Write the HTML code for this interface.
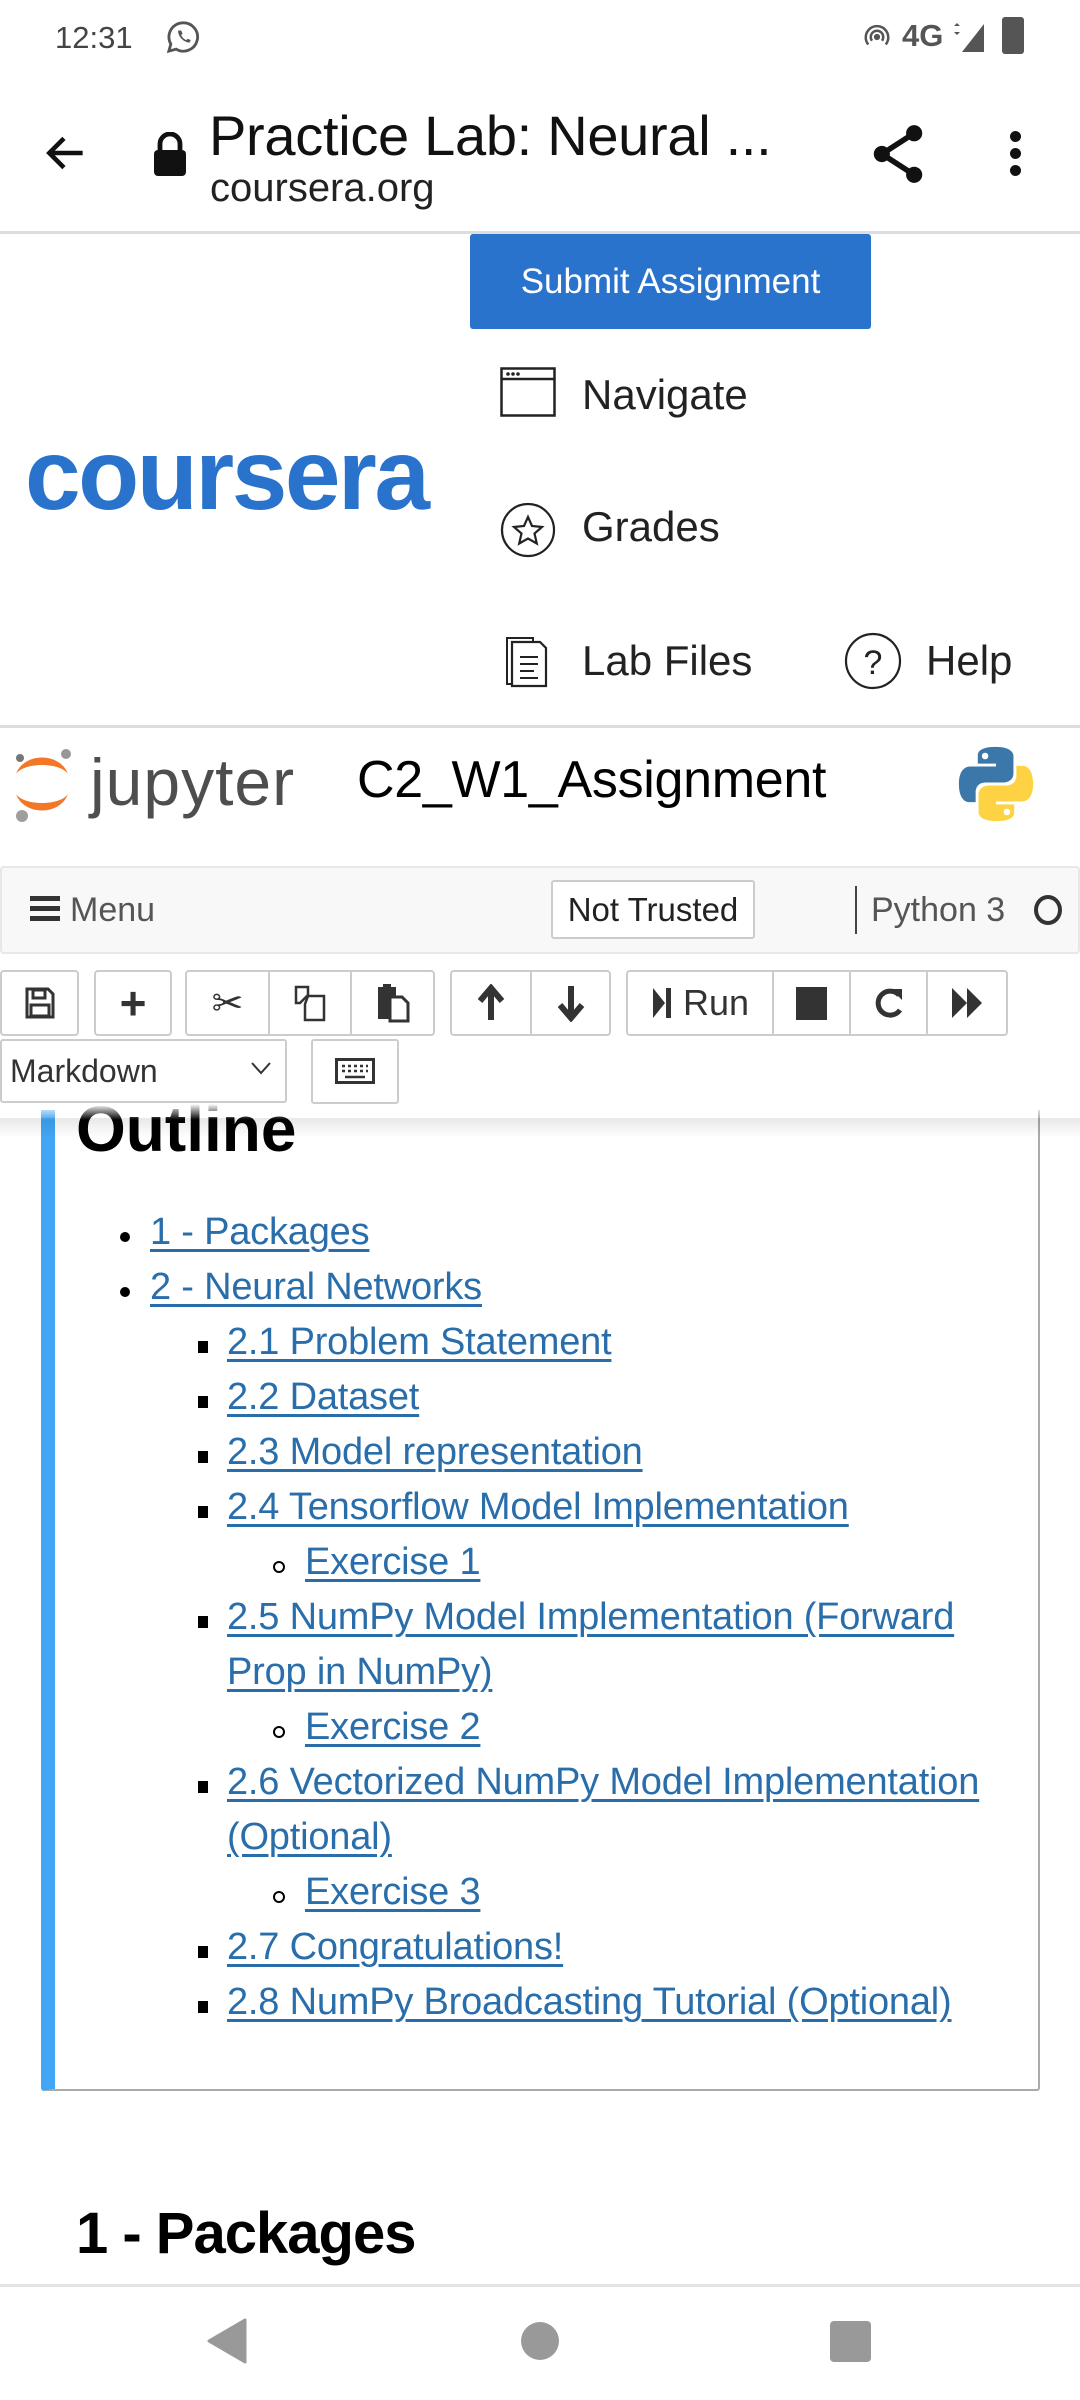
<!DOCTYPE html>
<html><head><meta charset="utf-8"><style>
*{margin:0;padding:0;box-sizing:border-box}
body{width:1080px;height:2400px;position:relative;overflow:hidden;background:#fff;font-family:"Liberation Sans",sans-serif;color:#000}
.a{position:absolute;white-space:nowrap}
.lk{color:#296eaa;text-decoration:underline;text-decoration-thickness:3px;text-underline-offset:5px;font-size:38px;letter-spacing:-0.2px}
.btn{position:absolute;top:970px;height:66px;border:2px solid #ccc;border-radius:4px;background:#fff}
.bi{position:absolute;top:0;height:62px;display:flex;align-items:center;justify-content:center;border-right:2px solid #ccc}
.bi:last-child{border-right:none}
.dot{position:absolute;width:10px;height:10px;border-radius:50%;background:#000}
.sq{position:absolute;width:10px;height:12px;background:#000}
.ci{position:absolute;width:12px;height:12px;border-radius:50%;border:2px solid #000}
</style></head><body>

<!-- status bar -->
<div class="a" style="left:55px;top:20px;font-size:31px;color:#444">12:31</div>
<svg class="a" style="left:166px;top:20px" width="34" height="34" viewBox="0 0 24 24"><path d="M12 2a10 10 0 0 0-8.6 15L2 22l5.2-1.4A10 10 0 1 0 12 2z" fill="none" stroke="#555" stroke-width="2"/><path d="M8.5 7.5c0 4 3.5 8 8 8.5l1-1.8-2.2-1-1 1c-1.5-.6-3-2-3.6-3.6l1-1-1-2.2z" fill="#555"/></svg>
<svg class="a" style="left:862px;top:22px" width="30" height="30" viewBox="0 0 24 24" fill="none" stroke="#555" stroke-width="2"><path d="M5 18a9 9 0 1 1 14 0"/><path d="M8 15a5 5 0 1 1 8 0"/><circle cx="12" cy="12" r="1.5" fill="#555"/></svg>
<div class="a" style="left:902px;top:18px;font-size:31px;color:#555;font-weight:bold">4G</div>
<svg class="a" style="left:950px;top:22px" width="36" height="32" viewBox="0 0 36 32"><path d="M4 4l3-3 3 3zM4 10l3 3 3-3z" fill="#555"/><path d="M34 2v28H12z" fill="#555"/></svg>
<div class="a" style="left:1002px;top:17px;width:22px;height:37px;background:#555;border-radius:3px"></div>

<!-- browser toolbar -->
<svg class="a" style="left:40px;top:128px" width="52" height="50" viewBox="0 0 24 24"><path d="M20 12H5M11 5l-7 7 7 7" fill="none" stroke="#111" stroke-width="2.2"/></svg>
<svg class="a" style="left:152px;top:132px" width="36" height="44" viewBox="0 0 18 22"><path d="M4 9V6a5 5 0 0 1 10 0v3" fill="none" stroke="#111" stroke-width="2.4"/><rect x="1" y="9" width="16" height="13" rx="2" fill="#111"/></svg>
<div class="a" style="left:209px;top:103px;font-size:56px;color:#111;letter-spacing:-0.3px">Practice Lab: Neural ...</div>
<div class="a" style="left:210px;top:166px;font-size:40px;color:#222">coursera.org</div>
<svg class="a" style="left:870px;top:124px" width="56" height="60" viewBox="0 0 24 26"><circle cx="19" cy="4" r="3.5" fill="#111"/><circle cx="5" cy="13" r="3.5" fill="#111"/><circle cx="19" cy="22" r="3.5" fill="#111"/><path d="M19 4L5 13l14 9" fill="none" stroke="#111" stroke-width="2.4"/></svg>
<div class="a" style="left:1010px;top:131px;width:11px;height:11px;border-radius:50%;background:#111"></div>
<div class="a" style="left:1010px;top:148px;width:11px;height:11px;border-radius:50%;background:#111"></div>
<div class="a" style="left:1010px;top:165px;width:11px;height:11px;border-radius:50%;background:#111"></div>
<div class="a" style="left:0;top:231px;width:1080px;height:3px;background:#ddd"></div>

<!-- coursera header -->
<div class="a" style="left:470px;top:234px;width:401px;height:95px;background:#2a73cc;border-radius:3px;color:#fff;font-size:35px;display:flex;align-items:center;justify-content:center">Submit Assignment</div>
<div class="a" style="left:25px;top:418px;font-size:100px;font-weight:bold;color:#2a73cc;letter-spacing:-2.5px">coursera</div>
<svg class="a" style="left:500px;top:367px" width="56" height="50" viewBox="0 0 56 50"><rect x="1.5" y="1.5" width="53" height="47" fill="none" stroke="#222" stroke-width="2.5"/><line x1="1" y1="12" x2="55" y2="12" stroke="#222" stroke-width="2.5"/><circle cx="8" cy="7" r="1.8" fill="#222"/><circle cx="13" cy="7" r="1.8" fill="#222"/><circle cx="18" cy="7" r="1.8" fill="#222"/></svg>
<div class="a" style="left:582px;top:371px;font-size:42px;color:#222">Navigate</div>
<svg class="a" style="left:500px;top:502px" width="56" height="56" viewBox="0 0 56 56"><circle cx="28" cy="28" r="26" fill="none" stroke="#222" stroke-width="2.2"/><path d="M28 15l4 9 10 1-7.5 6.5 2.3 10L28 36.5 19.2 41.5l2.3-10L14 25l10-1z" fill="none" stroke="#222" stroke-width="2.2"/></svg>
<div class="a" style="left:582px;top:503px;font-size:42px;color:#222">Grades</div>
<svg class="a" style="left:503px;top:633px" width="46" height="56" viewBox="0 0 46 56"><path d="M4 5h26v46H4z" fill="none" stroke="#222" stroke-width="2"/><path d="M9 9h28l6 6v38H9z" fill="#fff" stroke="#222" stroke-width="2.2"/><path d="M17 24h18M17 31h18M17 38h14M17 45h18" stroke="#222" stroke-width="2"/></svg>
<div class="a" style="left:582px;top:637px;font-size:42px;color:#222">Lab Files</div>
<svg class="a" style="left:844px;top:632px" width="58" height="58" viewBox="0 0 58 58"><circle cx="29" cy="29" r="27" fill="none" stroke="#222" stroke-width="2.2"/><text x="29" y="42" font-family="Liberation Sans" font-size="34" text-anchor="middle" fill="#222">?</text></svg>
<div class="a" style="left:926px;top:637px;font-size:42px;color:#222">Help</div>
<div class="a" style="left:0;top:725px;width:1080px;height:3px;background:#ddd"></div>

<!-- jupyter header -->
<svg class="a" style="left:10px;top:744px" width="64" height="82" viewBox="0 0 64 82"><path d="M6 30C14 8 50 8 58 30C50 18 14 18 6 30z" fill="#f37726"/><path d="M6 50C14 72 50 72 58 50C50 62 14 62 6 50z" fill="#f37726"/><circle cx="10" cy="14" r="4" fill="#767677"/><circle cx="56" cy="10" r="5" fill="#989798"/><circle cx="12" cy="72" r="6" fill="#9e9e9e"/></svg>
<div class="a" style="left:90px;top:744px;font-size:66px;color:#4e4e4e;letter-spacing:1px">jupyter</div>
<div class="a" style="left:357px;top:750px;font-size:52px;color:#000;letter-spacing:-0.3px">C2_W1_Assignment</div>
<svg class="a" style="left:956px;top:744px" width="80" height="80" viewBox="0 0 110 110"><path d="M54 4c-25 0-24 11-24 11v12h25v4H20S4 29 4 55s14 25 14 25h9V67s-1-14 14-14h24s14 0 14-13V17S81 4 54 4zM40 12a4.5 4.5 0 1 1 0 9 4.5 4.5 0 0 1 0-9z" fill="#3b77a8"/><path d="M56 106c25 0 24-11 24-11V83H55v-4h35s16 2 16-24-14-25-14-25h-9v13s1 14-14 14H45s-14 0-14 13v23s-2 13 25 13zm14-8a4.5 4.5 0 1 1 0-9 4.5 4.5 0 0 1 0 9z" fill="#fdd343"/></svg>

<!-- menu bar -->
<div class="a" style="left:0;top:866px;width:1080px;height:88px;background:#f8f8f8;border:2px solid #e7e7e7;border-radius:4px"></div>
<div class="a" style="left:30px;top:896px;width:30px;height:5px;background:#333;box-shadow:0 10px 0 #333,0 20px 0 #333"></div>
<div class="a" style="left:70px;top:891px;font-size:34px;color:#555">Menu</div>
<div class="a" style="left:551px;top:880px;width:204px;height:59px;border:2px solid #ccc;border-radius:3px;background:#fff;font-size:33px;color:#222;display:flex;align-items:center;justify-content:center">Not Trusted</div>
<div class="a" style="left:855px;top:886px;width:2px;height:48px;background:#444"></div>
<div class="a" style="left:871px;top:891px;font-size:34px;color:#555">Python 3</div>
<div class="a" style="left:1034px;top:895px;width:28px;height:30px;border:4px solid #333;border-radius:50%"></div>

<!-- toolbar buttons -->
<div class="btn" style="left:0;width:79px"><div class="bi" style="left:0;width:75px"><svg width="30" height="32" viewBox="0 0 30 32"><path d="M2 2h21l5 5v23H2z" fill="none" stroke="#333" stroke-width="3"/><rect x="8" y="3" width="12" height="8" fill="none" stroke="#333" stroke-width="3"/><rect x="6" y="18" width="18" height="11" fill="none" stroke="#333" stroke-width="3"/></svg></div></div>
<div class="btn" style="left:94px;width:78px"><div class="bi" style="left:0;width:74px;font-size:46px;font-weight:bold;color:#333">+</div></div>
<div class="btn" style="left:185px;width:250px">
 <div class="bi" style="left:0;width:83px;font-size:38px;color:#333">✂</div>
 <div class="bi" style="left:83px;width:82px"><svg width="34" height="38" viewBox="0 0 34 38"><path d="M3 3h12v8l-8 8H3z" fill="none" stroke="#333" stroke-width="2.5"/><path d="M15 12h16v24H12V20z" fill="none" stroke="#333" stroke-width="2.5"/></svg></div>
 <div class="bi" style="left:165px;width:81px"><svg width="34" height="40" viewBox="0 0 34 40"><rect x="2" y="4" width="18" height="32" fill="#333"/><rect x="7" y="1" width="8" height="6" fill="#333"/><path d="M14 14h12l6 6v18H14z" fill="#fff" stroke="#333" stroke-width="3"/></svg></div>
</div>
<div class="btn" style="left:450px;width:161px">
 <div class="bi" style="left:0;width:80px"><svg width="30" height="38" viewBox="0 0 30 38"><path d="M15 36V6M4 17L15 4l11 13" fill="none" stroke="#333" stroke-width="6"/></svg></div>
 <div class="bi" style="left:80px;width:77px"><svg width="30" height="38" viewBox="0 0 30 38"><path d="M15 2v30M4 21l11 13 11-13" fill="none" stroke="#333" stroke-width="6"/></svg></div>
</div>
<div class="btn" style="left:626px;width:382px">
 <div class="bi" style="left:0;width:146px;font-size:36px;color:#333"><svg width="22" height="36" viewBox="0 0 22 36" style="margin-right:10px"><path d="M2 3l12 15L2 33z" fill="#333"/><rect x="15" y="3" width="5" height="30" fill="#333"/></svg>Run</div>
 <div class="bi" style="left:146px;width:77px"><div style="width:31px;height:33px;background:#333"></div></div>
 <div class="bi" style="left:223px;width:77px"><svg width="32" height="36" viewBox="0 0 32 36"><path d="M26 10A12 12 0 1 0 27 25" fill="none" stroke="#333" stroke-width="5"/><path d="M18 4h11v11z" fill="#333"/></svg></div>
 <div class="bi" style="left:300px;width:78px"><svg width="34" height="34" viewBox="0 0 34 34"><path d="M2 2l15 15L2 32zM17 2l15 15-15 15z" fill="#333"/></svg></div>
</div>
<div class="a" style="left:0;top:1039px;width:287px;height:64px;border:2px solid #ccc;border-radius:3px;background:#fff"></div>
<div class="a" style="left:10px;top:1053px;font-size:32px;color:#333">Markdown</div>
<svg class="a" style="left:250px;top:1060px" width="22" height="16" viewBox="0 0 22 16"><path d="M2 3l9 10 9-10" fill="none" stroke="#333" stroke-width="2"/></svg>
<div class="a" style="left:311px;top:1039px;width:88px;height:65px;border:2px solid #ccc;border-radius:3px;background:#fff"></div>
<svg class="a" style="left:335px;top:1058px" width="40" height="26" viewBox="0 0 40 26"><rect x="1.5" y="1.5" width="37" height="23" fill="none" stroke="#333" stroke-width="3"/><path d="M7 8h3M13 8h3M19 8h3M25 8h3M31 8h2M7 13h3M13 13h3M19 13h3M25 13h3M31 13h2M10 19h20" stroke="#333" stroke-width="2.5"/></svg>

<!-- cell -->
<div class="a" style="left:41px;top:1110px;width:999px;height:981px;border:2px solid #aaa;border-top:none;border-left:14px solid #42a5f5;border-radius:0 0 3px 3px"></div>
<div class="a" style="left:76px;top:1092px;font-size:64px;font-weight:bold;color:#000">Outline</div>
<div class="a" style="left:0;top:1104px;width:1080px;height:16px;background:linear-gradient(#fff,rgba(255,255,255,0))"></div>
<div class="a" style="left:0;top:1118px;width:1080px;height:20px;background:linear-gradient(rgba(0,0,0,0.09),rgba(0,0,0,0))"></div>

<div class="dot" style="left:120px;top:1232px"></div><div class="a lk" style="left:150px;top:1211px">1 - Packages</div>
<div class="dot" style="left:120px;top:1287px"></div><div class="a lk" style="left:150px;top:1266px">2 - Neural Networks</div>
<div class="sq" style="left:198px;top:1341px"></div><div class="a lk" style="left:227px;top:1321px">2.1 Problem Statement</div>
<div class="sq" style="left:198px;top:1396px"></div><div class="a lk" style="left:227px;top:1376px">2.2 Dataset</div>
<div class="sq" style="left:198px;top:1451px"></div><div class="a lk" style="left:227px;top:1431px">2.3 Model representation</div>
<div class="sq" style="left:198px;top:1506px"></div><div class="a lk" style="left:227px;top:1486px">2.4 Tensorflow Model Implementation</div>
<div class="ci" style="left:273px;top:1561px"></div><div class="a lk" style="left:305px;top:1541px">Exercise 1</div>
<div class="sq" style="left:198px;top:1616px"></div><div class="a lk" style="left:227px;top:1596px">2.5 NumPy Model Implementation (Forward</div>
<div class="a lk" style="left:227px;top:1651px">Prop in NumPy)</div>
<div class="ci" style="left:273px;top:1726px"></div><div class="a lk" style="left:305px;top:1706px">Exercise 2</div>
<div class="sq" style="left:198px;top:1781px"></div><div class="a lk" style="left:227px;top:1761px">2.6 Vectorized NumPy Model Implementation</div>
<div class="a lk" style="left:227px;top:1816px">(Optional)</div>
<div class="ci" style="left:273px;top:1891px"></div><div class="a lk" style="left:305px;top:1871px">Exercise 3</div>
<div class="sq" style="left:198px;top:1946px"></div><div class="a lk" style="left:227px;top:1926px">2.7 Congratulations!</div>
<div class="sq" style="left:198px;top:2001px"></div><div class="a lk" style="left:227px;top:1981px">2.8 NumPy Broadcasting Tutorial (Optional)</div>

<div class="a" style="left:76px;top:2200px;font-size:58px;font-weight:bold;color:#000;letter-spacing:-1px">1 - Packages</div>

<!-- nav bar -->
<div class="a" style="left:0;top:2284px;width:1080px;height:116px;background:#fff;border-top:3px solid #e3e3e3"></div>
<svg class="a" style="left:205px;top:2318px" width="42" height="46" viewBox="0 0 42 46"><path d="M40 2v42L4 23z" fill="#999" stroke="#999" stroke-width="3" stroke-linejoin="round"/></svg>
<div class="a" style="left:521px;top:2322px;width:38px;height:38px;border-radius:50%;background:#999"></div>
<div class="a" style="left:830px;top:2321px;width:41px;height:41px;border-radius:4px;background:#999"></div>
</body></html>
